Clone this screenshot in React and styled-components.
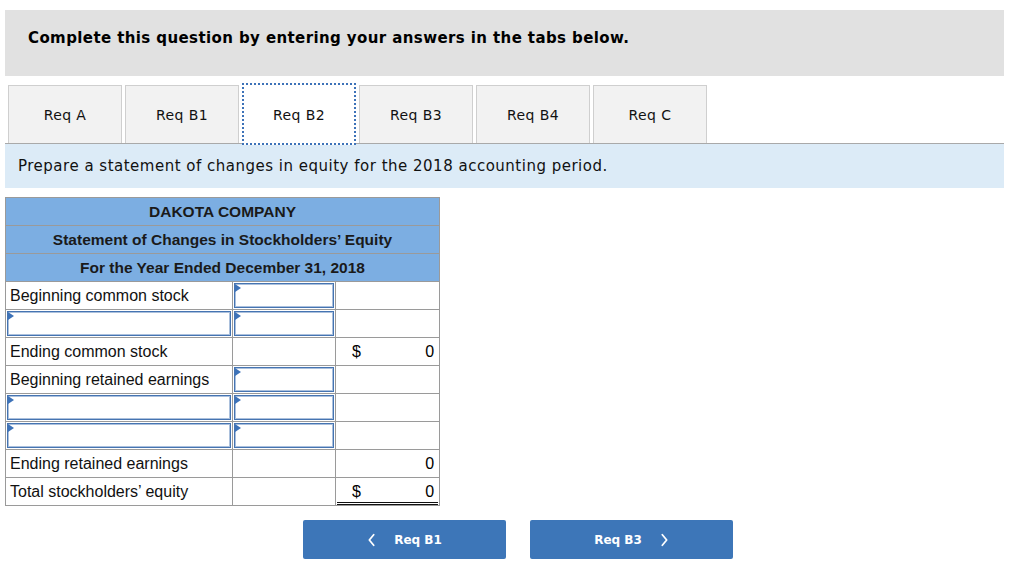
import React from 'react'
import styled, { createGlobalStyle } from 'styled-components'

const GlobalStyle = createGlobalStyle`
  html, body {
    margin: 0;
    padding: 0;
    background: #ffffff;
  }
  body {
    font-family: 'DejaVu Sans', Verdana, sans-serif;
    color: #000;
  }
`

const tabs = ['Req A', 'Req B1', 'Req B2', 'Req B3', 'Req B4', 'Req C']

// each row: label kind, input in middle col, value col content
const rows = [
  { label: 'Beginning common stock', mid: true },
  { labelInput: true, mid: true },
  { label: 'Ending common stock', dollar: true, value: '0', topRule: true },
  { label: 'Beginning retained earnings', mid: true },
  { labelInput: true, mid: true },
  { labelInput: true, mid: true },
  { label: 'Ending retained earnings', value: '0', topRule: true },
  { label: 'Total stockholders’ equity', dollar: true, value: '0', total: true }
]

export default function App() {
  return (
    <>
      <GlobalStyle />
      <Page>
        <Banner>Complete this question by entering your answers in the tabs below.</Banner>

        <TabRow>
          {tabs.map((t) => (
            <Tab key={t} active={t === 'Req B2'}>
              {t}
            </Tab>
          ))}
        </TabRow>

        <Instruction>Prepare a statement of changes in equity for the 2018 accounting period.</Instruction>

        <Sheet>
          <colgroup>
            <col style={{ width: 227 }} />
            <col style={{ width: 103 }} />
            <col style={{ width: 104 }} />
          </colgroup>
          <tbody>
            <tr>
              <HeadCell colSpan={3}>DAKOTA COMPANY</HeadCell>
            </tr>
            <tr>
              <HeadCell colSpan={3}>Statement of Changes in Stockholders’ Equity</HeadCell>
            </tr>
            <tr>
              <HeadCell colSpan={3}>For the Year Ended December 31, 2018</HeadCell>
            </tr>
            {rows.map((r, i) => (
              <tr key={i}>
                <LabelCell>
                  {r.labelInput ? (
                    <InputBox>
                      <Marker />
                    </InputBox>
                  ) : (
                    r.label
                  )}
                </LabelCell>
                <MidCell topRule={r.topRule}>
                  {r.mid && (
                    <InputBox>
                      <Marker />
                    </InputBox>
                  )}
                </MidCell>
                <ValueCell total={r.total}>
                  {r.value && (
                    <Amount>
                      <span>{r.dollar ? '$' : ''}</span>
                      <span>{r.value}</span>
                    </Amount>
                  )}
                </ValueCell>
              </tr>
            ))}
          </tbody>
        </Sheet>

        <NavRow>
          <NavButton>
            <Chevron viewBox="0 0 10 16">
              <path d="M7.5 2 L2.5 8 L7.5 14" />
            </Chevron>
            <span>Req B1</span>
          </NavButton>
          <NavButton>
            <span>Req B3</span>
            <Chevron viewBox="0 0 10 16">
              <path d="M2.5 2 L7.5 8 L2.5 14" />
            </Chevron>
          </NavButton>
        </NavRow>
      </Page>
    </>
  )
}

const Page = styled.div`
  width: 999px;
  padding: 10px 0 0 5px;
`

const Banner = styled.div`
  height: 66px;
  box-sizing: border-box;
  background: #e1e1e1;
  padding: 19px 0 0 23px;
  font-size: 15px;
  font-weight: bold;
  letter-spacing: 0.4px;
`

const TabRow = styled.div`
  display: flex;
  gap: 3px;
  margin-top: 7px;
  padding-left: 3px;
  height: 60px;
  border-bottom: 1px solid #a9a9a9;
  align-items: flex-end;
`

const Tab = styled.div`
  width: 114px;
  height: ${(p) => (p.active ? '62px' : '58px')};
  box-sizing: border-box;
  display: flex;
  align-items: center;
  justify-content: center;
  font-size: 14px;
  letter-spacing: 0.4px;
  color: #111;
  background: ${(p) => (p.active ? '#ffffff' : '#f2f2f2')};
  border: ${(p) => (p.active ? '2px dotted #3d72b8' : '1px solid #cfcfcf')};
  border-bottom: ${(p) => (p.active ? '2px dotted #3d72b8' : 'none')};
  margin-bottom: ${(p) => (p.active ? '-2px' : '0')};
  padding-top: ${(p) => (p.active ? '1px' : '0')};
  position: relative;
`

const Instruction = styled.div`
  height: 44px;
  box-sizing: border-box;
  background: #dcebf7;
  padding: 13px 0 0 13px;
  font-size: 15px;
  letter-spacing: 0.5px;
  color: #111;
`

const Sheet = styled.table`
  margin-top: 9px;
  border-collapse: collapse;
  width: 434px;
  table-layout: fixed;
  font-family: 'Liberation Sans', Arial, sans-serif;
  font-size: 16px;
`

const HeadCell = styled.td`
  height: 27px;
  padding: 0;
  text-align: center;
  font-weight: bold;
  font-size: 15.5px;
  color: #1a1a1a;
  background: #7caee2;
  border: 1px solid #9a9a9a;
`

const LabelCell = styled.td`
  height: 27px;
  padding: 0 0 0 4px;
  border: 1px solid #9a9a9a;
  color: #111;
  white-space: nowrap;
  position: relative;
`

const MidCell = styled.td`
  height: 27px;
  padding: 0;
  border: 1px solid #9a9a9a;
  border-top: ${(p) => (p.topRule ? '1px solid #222' : '1px solid #9a9a9a')};
  position: relative;
`

const ValueCell = styled.td`
  height: 27px;
  padding: 0 5px 0 0;
  border: 1px solid #9a9a9a;
  border-top: ${(p) => (p.total ? '1px solid #222' : '1px solid #9a9a9a')};
  position: relative;
  &::after {
    content: '';
    display: ${(p) => (p.total ? 'block' : 'none')};
    position: absolute;
    left: 1px;
    right: 1px;
    bottom: 0;
    height: 1px;
    border-top: 1px solid #111;
    border-bottom: 1px solid #111;
  }
`

const Amount = styled.div`
  display: flex;
  justify-content: space-between;
  padding-left: 16px;
`

const InputBox = styled.div`
  position: absolute;
  inset: 1px 1px 1px 1px;
  border: 1px solid #4574b2;
  box-shadow: inset 0 0 0 1px rgba(69, 116, 178, 0.45);
  background: #fff;
`

const Marker = styled.div`
  position: absolute;
  left: 0;
  top: 0;
  width: 0;
  height: 0;
  border-top: 4px solid transparent;
  border-bottom: 4px solid transparent;
  border-left: 6px solid #3d72b8;
`

const NavRow = styled.div`
  display: flex;
  gap: 24px;
  margin-top: 14px;
  padding-left: 298px;
`

const NavButton = styled.button`
  width: 203px;
  height: 39px;
  display: flex;
  align-items: center;
  justify-content: center;
  gap: 18px;
  background: #3d76b8;
  color: #fff;
  border: none;
  border-radius: 2px;
  font-family: 'DejaVu Sans', Verdana, sans-serif;
  font-weight: bold;
  font-size: 12px;
  cursor: pointer;
`

const Chevron = styled.svg`
  width: 9px;
  height: 14px;
  fill: none;
  stroke: #fff;
  stroke-width: 2;
  stroke-linecap: round;
  stroke-linejoin: round;
`
